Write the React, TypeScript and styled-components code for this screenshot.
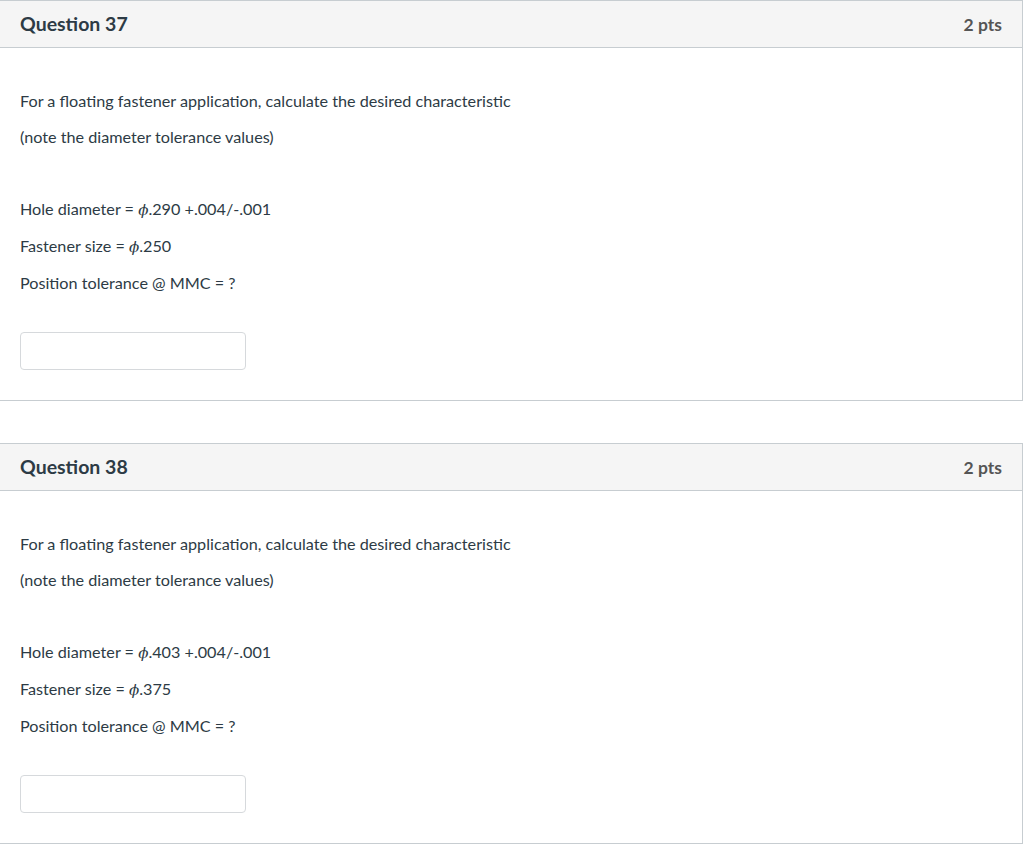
import styled, { createGlobalStyle } from 'styled-components';

const GlobalStyle = createGlobalStyle`
  body {
    margin: 0;
    background: #fff;
    font-family: Lato, "Noto Sans", sans-serif;
    color: #2d3b45;
  }
`

type Question = {
  number: number
  points: number
  hole: string
  fastener: string
}

const questions: Question[] = [
  { number: 37, points: 2, hole: '.290 +.004/-.001', fastener: '.250' },
  { number: 38, points: 2, hole: '.403 +.004/-.001', fastener: '.375' },
]

const App = () => {
  return (
    <>
      <GlobalStyle />
      <Page>
        {questions.map((q) => (
          <Card key={q.number}>
            <Header>
              <Title>Question {q.number}</Title>
              <Points>{q.points} pts</Points>
            </Header>
            <Body>
              <Para>For a floating fastener application, calculate the desired characteristic</Para>
              <Para>(note the diameter tolerance values)</Para>
              <Para>&nbsp;</Para>
              <Para>Hole diameter = <Phi>ϕ</Phi>{q.hole}</Para>
              <Para>Fastener size = <Phi>ϕ</Phi>{q.fastener}</Para>
              <Para>Position tolerance @ MMC = ?</Para>
              <Answer type="text" aria-label="answer" />
            </Body>
          </Card>
        ))}
      </Page>
    </>
  )
}

const Page = styled.div`
  width: 1023px;
`

const Card = styled.div`
  border: 1px solid #c7cdd1;
  border-left: none;
  margin-bottom: 42px;
  background: #fff;
`

const Header = styled.div`
  display: flex;
  align-items: center;
  justify-content: space-between;
  height: 46px;
  padding: 0 20px;
  background: #f5f5f5;
  border-bottom: 1px solid #c7cdd1;
`

const Title = styled.div`
  font-size: 19.5px;
  font-weight: bold;
  color: #2d3b45;
  padding-bottom: 1px;
`

const Points = styled.div`
  font-size: 17.5px;
  font-weight: bold;
  color: #555;
`

const Body = styled.div`
  padding: 29px 20px 30px;
`

const Para = styled.p`
  margin: 12px 0;
  font-size: 16.2px;
  line-height: 24px;
`

const Phi = styled.em`
  font-family: "DejaVu Serif", serif;
  font-size: 15px;
`

const Answer = styled.input`
  display: block;
  box-sizing: border-box;
  margin-top: 37px;
  width: 226px;
  height: 38px;
  border: 1px solid #d6d9dc;
  border-radius: 4px;
  background: #fff;
`

export default App
